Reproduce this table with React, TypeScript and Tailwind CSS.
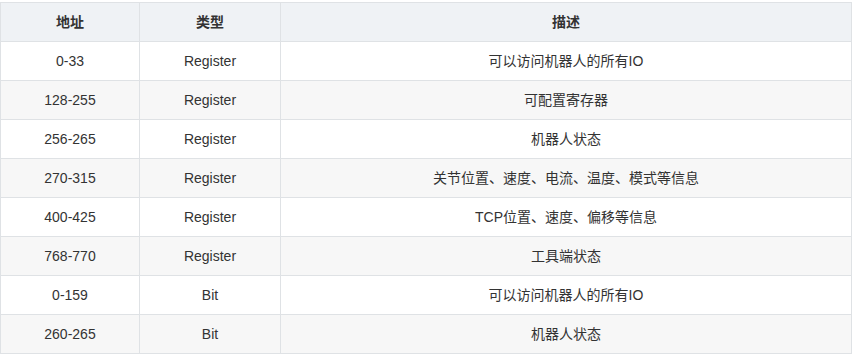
const ROWS: [string, string, string][] = [
  ['0-33', 'Register', '可以访问机器人的所有IO'],
  ['128-255', 'Register', '可配置寄存器'],
  ['256-265', 'Register', '机器人状态'],
  ['270-315', 'Register', '关节位置、速度、电流、温度、模式等信息'],
  ['400-425', 'Register', 'TCP位置、速度、偏移等信息'],
  ['768-770', 'Register', '工具端状态'],
  ['0-159', 'Bit', '可以访问机器人的所有IO'],
  ['260-265', 'Bit', '机器人状态'],
]

export default function App() {
  return (
    <div className="bg-white pt-[2px]" style={{ fontFamily: '"Liberation Sans", "Noto Sans CJK SC", sans-serif' }}>
      <table className="w-[852px] table-fixed border-collapse text-[14px] text-[#333]">
        <colgroup>
          <col className="w-[139px]" />
          <col className="w-[141px]" />
          <col />
        </colgroup>
        <thead>
          <tr className="h-[39px] bg-[#eff2f5]">
            <th className="border border-[#dfe2e5] text-center font-bold">地址</th>
            <th className="border border-[#dfe2e5] text-center font-bold">类型</th>
            <th className="border border-[#dfe2e5] text-center font-bold">描述</th>
          </tr>
        </thead>
        <tbody>
          {ROWS.map(([addr, type, desc], i) => (
            <tr key={i} className={`h-[39px] ${i % 2 === 1 ? 'bg-[#f7f7f7]' : 'bg-white'}`}>
              <td className="border border-[#dfe2e5] text-center">{addr}</td>
              <td className="border border-[#dfe2e5] text-center">{type}</td>
              <td className="border border-[#dfe2e5] text-center">{desc}</td>
            </tr>
          ))}
        </tbody>
      </table>
    </div>
  )
}
